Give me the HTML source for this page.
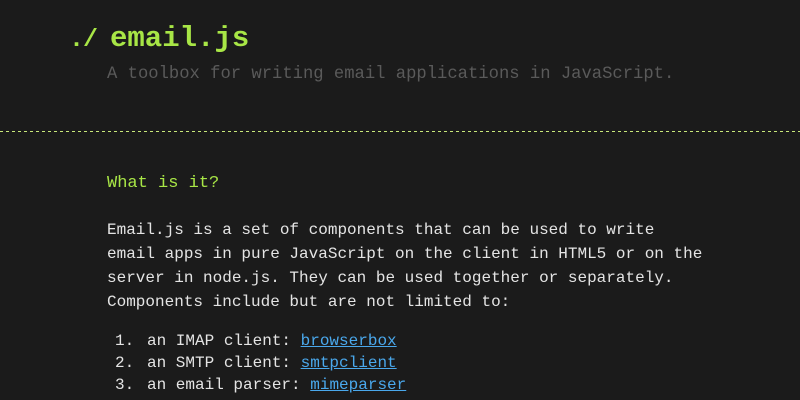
<!DOCTYPE html>
<html><head><meta charset="utf-8"><style>
html,body{margin:0;padding:0;background:#1b1b1b;width:800px;height:400px;overflow:hidden;font-family:"Liberation Mono",monospace;}
.t{position:absolute;white-space:pre;}
#dot{left:69px;top:25px;font-size:25px;font-weight:bold;color:#a8e646;letter-spacing:-1px;}
#title{left:110px;top:22px;font-size:29px;font-weight:bold;color:#a8e646;}
#sub{left:107px;top:65px;font-size:17.2px;color:#5a5a5a;}
#hr{position:absolute;left:0;top:131px;width:800px;height:1px;background:repeating-linear-gradient(90deg,#c8e87a 0 3px,transparent 3px 6px);}
#h{left:107px;top:174px;font-size:17px;color:#a8e646;}
#p{left:107px;top:218px;font-size:16px;line-height:24px;color:#e4e4e4;}
.li{position:absolute;font-size:16px;color:#e4e4e4;white-space:pre;}
.n{position:absolute;left:115px;}
.x{position:absolute;left:147px;}
a{color:#4aa8ec;text-decoration:underline;}
</style></head><body>
<div class="t" id="dot">./</div>
<div class="t" id="title">email.js</div>
<div class="t" id="sub">A toolbox for writing email applications in JavaScript.</div>
<div id="hr"></div>
<div class="t" id="h">What is it?</div>
<div class="t" id="p">Email.js is a set of components that can be used to write
email apps in pure JavaScript on the client in HTML5 or on the
server in node.js. They can be used together or separately.
Components include but are not limited to:</div>
<div class="li" style="top:332px"><span class="n">1.</span><span class="x">an IMAP client: <a href="#">browserbox</a></span></div>
<div class="li" style="top:354px"><span class="n">2.</span><span class="x">an SMTP client: <a href="#">smtpclient</a></span></div>
<div class="li" style="top:376px"><span class="n">3.</span><span class="x">an email parser: <a href="#">mimeparser</a></span></div>
</body></html>
